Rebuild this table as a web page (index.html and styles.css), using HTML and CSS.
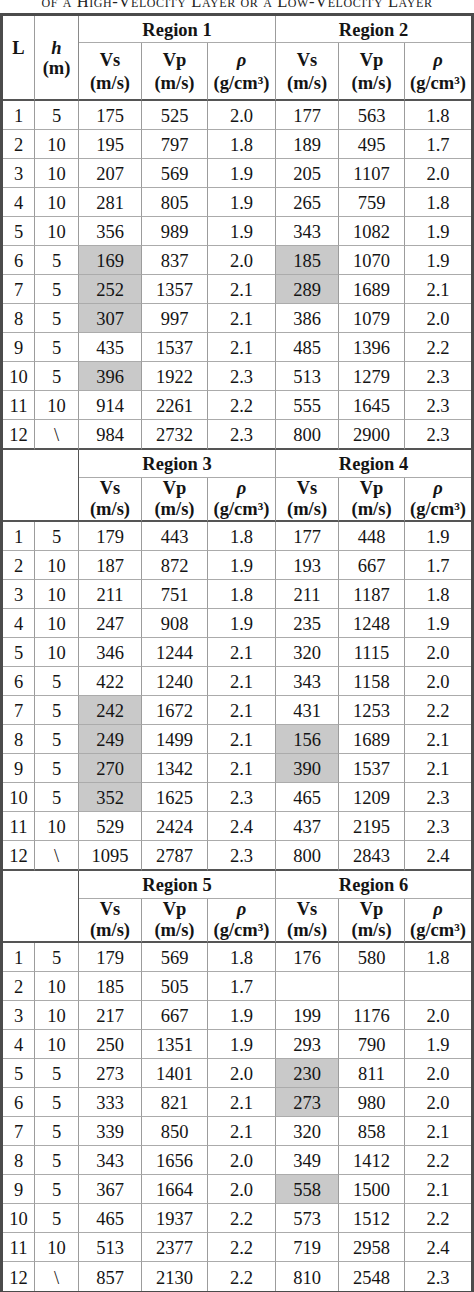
FILE: index.html
```html
<!DOCTYPE html>
<html lang="en">
<head>
<meta charset="utf-8">
<title>Layer parameters</title>
<link rel="stylesheet" href="styles.css">
</head>
<body>
<div class="caption">of a High-Velocity Layer or a Low-Velocity Layer</div>
<table class="data">
<colgroup>
<col class="c-l"><col class="c-h"><col class="c-vs"><col class="c-vp"><col class="c-rho"><col class="c-vs2"><col class="c-vp2"><col class="c-rho2">
</colgroup>
<tbody>
<tr class="reg first">
<th class="lh" rowspan="2">L</th>
<th class="lh sep" rowspan="2"><i>h</i><br>(m)</th>
<th colspan="3">Region 1</th>
<th colspan="3" class="last">Region 2</th>
</tr>
<tr class="sub first">
<th>Vs<br>(m/s)</th><th>Vp<br>(m/s)</th><th><i>ρ</i><br>(g/cm³)</th>
<th>Vs<br>(m/s)</th><th>Vp<br>(m/s)</th><th class="last"><i>ρ</i><br>(g/cm³)</th>
</tr>
<tr><td>1</td><td>5</td><td>175</td><td>525</td><td>2.0</td><td>177</td><td>563</td><td class="last">1.8</td></tr>
<tr><td>2</td><td>10</td><td>195</td><td>797</td><td>1.8</td><td>189</td><td>495</td><td class="last">1.7</td></tr>
<tr><td>3</td><td>10</td><td>207</td><td>569</td><td>1.9</td><td>205</td><td>1107</td><td class="last">2.0</td></tr>
<tr><td>4</td><td>10</td><td>281</td><td>805</td><td>1.9</td><td>265</td><td>759</td><td class="last">1.8</td></tr>
<tr><td>5</td><td>10</td><td>356</td><td>989</td><td>1.9</td><td>343</td><td>1082</td><td class="last">1.9</td></tr>
<tr><td>6</td><td>5</td><td class="hl">169</td><td>837</td><td>2.0</td><td class="hl">185</td><td>1070</td><td class="last">1.9</td></tr>
<tr><td>7</td><td>5</td><td class="hl">252</td><td>1357</td><td>2.1</td><td class="hl">289</td><td>1689</td><td class="last">2.1</td></tr>
<tr><td>8</td><td>5</td><td class="hl">307</td><td>997</td><td>2.1</td><td>386</td><td>1079</td><td class="last">2.0</td></tr>
<tr><td>9</td><td>5</td><td>435</td><td>1537</td><td>2.1</td><td>485</td><td>1396</td><td class="last">2.2</td></tr>
<tr><td>10</td><td>5</td><td class="hl">396</td><td>1922</td><td>2.3</td><td>513</td><td>1279</td><td class="last">2.3</td></tr>
<tr><td>11</td><td>10</td><td>914</td><td>2261</td><td>2.2</td><td>555</td><td>1645</td><td class="last">2.3</td></tr>
<tr class="end"><td>12</td><td>\</td><td>984</td><td>2732</td><td>2.3</td><td>800</td><td>2900</td><td class="last">2.3</td></tr>

<tr class="reg">
<th class="blank" colspan="2" rowspan="2"></th>
<th colspan="3">Region 3</th>
<th colspan="3" class="last">Region 4</th>
</tr>
<tr class="sub">
<th>Vs<br>(m/s)</th><th>Vp<br>(m/s)</th><th><i>ρ</i><br>(g/cm³)</th>
<th>Vs<br>(m/s)</th><th>Vp<br>(m/s)</th><th class="last"><i>ρ</i><br>(g/cm³)</th>
</tr>
<tr><td>1</td><td>5</td><td>179</td><td>443</td><td>1.8</td><td>177</td><td>448</td><td class="last">1.9</td></tr>
<tr><td>2</td><td>10</td><td>187</td><td>872</td><td>1.9</td><td>193</td><td>667</td><td class="last">1.7</td></tr>
<tr><td>3</td><td>10</td><td>211</td><td>751</td><td>1.8</td><td>211</td><td>1187</td><td class="last">1.8</td></tr>
<tr><td>4</td><td>10</td><td>247</td><td>908</td><td>1.9</td><td>235</td><td>1248</td><td class="last">1.9</td></tr>
<tr><td>5</td><td>10</td><td>346</td><td>1244</td><td>2.1</td><td>320</td><td>1115</td><td class="last">2.0</td></tr>
<tr><td>6</td><td>5</td><td>422</td><td>1240</td><td>2.1</td><td>343</td><td>1158</td><td class="last">2.0</td></tr>
<tr><td>7</td><td>5</td><td class="hl">242</td><td>1672</td><td>2.1</td><td>431</td><td>1253</td><td class="last">2.2</td></tr>
<tr><td>8</td><td>5</td><td class="hl">249</td><td>1499</td><td>2.1</td><td class="hl">156</td><td>1689</td><td class="last">2.1</td></tr>
<tr><td>9</td><td>5</td><td class="hl">270</td><td>1342</td><td>2.1</td><td class="hl">390</td><td>1537</td><td class="last">2.1</td></tr>
<tr><td>10</td><td>5</td><td class="hl">352</td><td>1625</td><td>2.3</td><td>465</td><td>1209</td><td class="last">2.3</td></tr>
<tr><td>11</td><td>10</td><td>529</td><td>2424</td><td>2.4</td><td>437</td><td>2195</td><td class="last">2.3</td></tr>
<tr class="end"><td>12</td><td>\</td><td>1095</td><td>2787</td><td>2.3</td><td>800</td><td>2843</td><td class="last">2.4</td></tr>

<tr class="reg">
<th class="blank" colspan="2" rowspan="2"></th>
<th colspan="3">Region 5</th>
<th colspan="3" class="last">Region 6</th>
</tr>
<tr class="sub">
<th>Vs<br>(m/s)</th><th>Vp<br>(m/s)</th><th><i>ρ</i><br>(g/cm³)</th>
<th>Vs<br>(m/s)</th><th>Vp<br>(m/s)</th><th class="last"><i>ρ</i><br>(g/cm³)</th>
</tr>
<tr><td>1</td><td>5</td><td>179</td><td>569</td><td>1.8</td><td>176</td><td>580</td><td class="last">1.8</td></tr>
<tr><td>2</td><td>10</td><td>185</td><td>505</td><td>1.7</td><td></td><td></td><td class="last"></td></tr>
<tr><td>3</td><td>10</td><td>217</td><td>667</td><td>1.9</td><td>199</td><td>1176</td><td class="last">2.0</td></tr>
<tr><td>4</td><td>10</td><td>250</td><td>1351</td><td>1.9</td><td>293</td><td>790</td><td class="last">1.9</td></tr>
<tr><td>5</td><td>5</td><td>273</td><td>1401</td><td>2.0</td><td class="hl">230</td><td>811</td><td class="last">2.0</td></tr>
<tr><td>6</td><td>5</td><td>333</td><td>821</td><td>2.1</td><td class="hl">273</td><td>980</td><td class="last">2.0</td></tr>
<tr><td>7</td><td>5</td><td>339</td><td>850</td><td>2.1</td><td>320</td><td>858</td><td class="last">2.1</td></tr>
<tr><td>8</td><td>5</td><td>343</td><td>1656</td><td>2.0</td><td>349</td><td>1412</td><td class="last">2.2</td></tr>
<tr><td>9</td><td>5</td><td>367</td><td>1664</td><td>2.0</td><td class="hl">558</td><td>1500</td><td class="last">2.1</td></tr>
<tr><td>10</td><td>5</td><td>465</td><td>1937</td><td>2.2</td><td>573</td><td>1512</td><td class="last">2.2</td></tr>
<tr><td>11</td><td>10</td><td>513</td><td>2377</td><td>2.2</td><td>719</td><td>2958</td><td class="last">2.4</td></tr>
<tr class="final"><td>12</td><td>\</td><td>857</td><td>2130</td><td>2.2</td><td>810</td><td>2548</td><td class="last">2.3</td></tr>
</tbody>
</table>
</body>
</html>
```

FILE: styles.css
```css
html, body {
  margin: 0;
  padding: 0;
  background: #ffffff;
}

body {
  width: 474px;
  overflow: hidden;
  font-family: "Liberation Serif", "Times New Roman", serif;
  color: #141414;
}

.caption {
  font-size: 16.5px;
  line-height: 4px;
  height: 4px;
  margin-bottom: 9px;
  text-align: center;
  font-variant: small-caps;
  letter-spacing: 0.6px;
  color: #222;
  white-space: nowrap;
}

.data {
  width: 474px;
  table-layout: fixed;
  border-collapse: separate;
  border-spacing: 0;
  border: 3px solid #4b4b4b;
  box-sizing: border-box;
}

.c-l { width: 32px; }
.c-h { width: 44px; }
.c-vs { width: 63px; }
.c-vp { width: 66px; }
.c-rho { width: 68px; }
.c-vs2 { width: 63px; }
.c-vp2 { width: 66px; }
.c-rho2 { width: 66px; }

.data td,
.data th {
  box-sizing: border-box;
  padding: 0;
  text-align: center;
  vertical-align: middle;
  font-size: 18.5px;
  line-height: 21px;
  border-right: 1px solid #9c9c9c;
  border-bottom: 1px solid #ababab;
  white-space: nowrap;
  overflow: hidden;
}

.data th {
  font-weight: bold;
}

.data .last {
  border-right: none;
}

.data td {
  height: 29px;
  padding-top: 3px;
}

.data tr.end td {
  height: 30px;
  border-bottom: 2px solid #555;
}

.data tr.final td {
  border-bottom: none;
}

.data tr.reg th {
  height: 28px;
  padding-top: 1px;
}

.data tr.reg.first th {
  height: 27px;
  padding-top: 2px;
}

.data tr.sub th {
  height: 44px;
  border-bottom: 2px solid #555;
}

.data tr.sub.first th {
  height: 58px;
  line-height: 23px;
  padding-top: 1px;
}

.data tr.reg.first th.lh {
  vertical-align: top;
  padding-top: 22px;
  line-height: 20px;
  border-bottom: 2px solid #555;
}

.data tr.reg th.blank {
  border-right: 1px solid #555;
  border-bottom: 2px solid #555;
}

.data tr.reg.first th.sep {
  border-right: 1px solid #8a8a8a;
}

.data td.hl {
  background: #c9c9c9;
}
```
